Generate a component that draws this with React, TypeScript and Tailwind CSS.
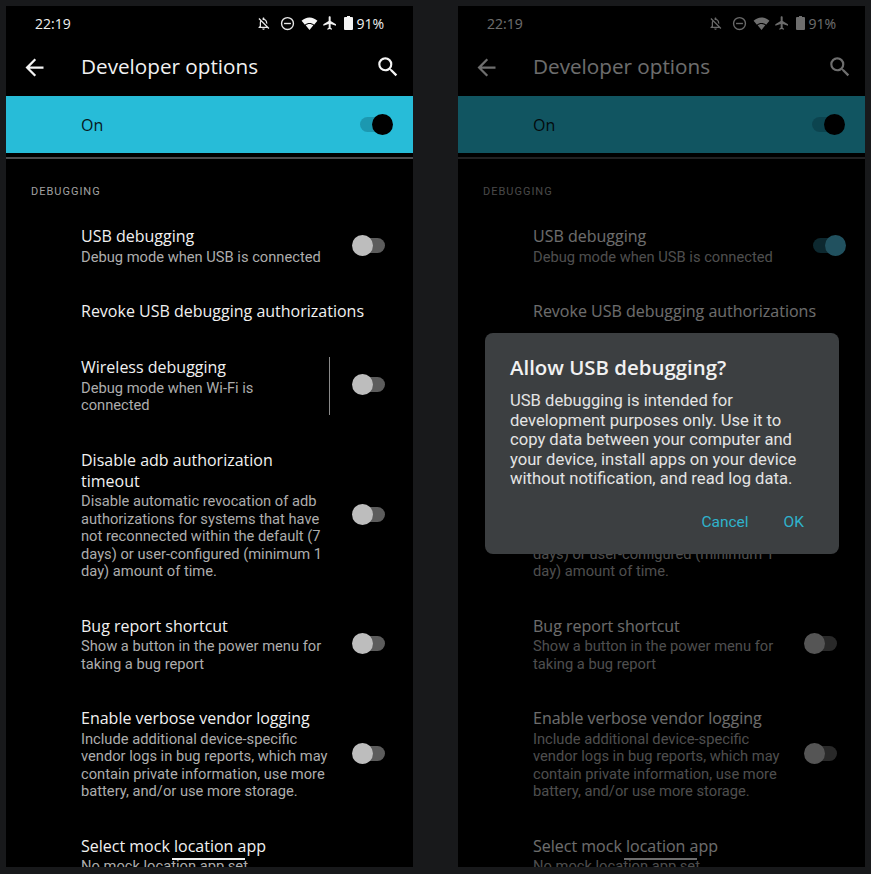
import React from "react";

const HEAD_FONT = "font-['Open_Sans',sans-serif]";
const BODY_FONT = "font-['Roboto',sans-serif]";

const Toggle: React.FC<{ on?: boolean; master?: boolean }> = ({ on, master }) => {
  const track = master ? "bg-[#1c98b0]" : on ? "bg-[#1d5a68]" : "bg-[#5c5c5c]";
  const thumb = master
    ? "bg-black right-[-9px]"
    : on
      ? "bg-[#4ab4d2] right-[-9px]"
      : "bg-[#bdbdbd] left-[-9px]";
  return (
    <div className="flex w-[42px] shrink-0 justify-center">
      <div className={`relative h-[15px] w-[24px] rounded-full ${track}`}>
        <div className={`absolute top-[-3px] h-[21px] w-[21px] rounded-full ${thumb}`} />
      </div>
    </div>
  );
};

const SettingRow: React.FC<{
  title: React.ReactNode;
  summary?: React.ReactNode;
  toggle?: boolean;
  on?: boolean;
  divider?: boolean;
}> = ({ title, summary, toggle, on, divider }) => (
  <div className="flex items-center pl-[75px] pr-[19px]">
    <div className={divider ? "w-[220px]" : toggle ? "w-[248px]" : "flex-1"}>
      <div className={`${HEAD_FONT} text-[16px] leading-[21px] text-[#f1f1f1]`}>{title}</div>
      {summary && (
        <div className={`${BODY_FONT} mt-[1.5px] text-[14.7px] leading-[17.5px] text-[#adadad]`}>
          {summary}
        </div>
      )}
    </div>
    {divider && <div className="ml-[28px] w-px self-stretch bg-[#8a8a8a]" />}
    {toggle && (
      <div className="mb-[2px] ml-auto">
        <Toggle on={on} />
      </div>
    )}
  </div>
);

const StatusIcons = () => (
  <div className="flex items-center">
    {/* bell off */}
    <svg width="15" height="15" viewBox="0 0 24 24" fill="#e8e8e8">
      <path d="M12 22c1.1 0 2-.9 2-2h-4c0 1.1.9 2 2 2zm0-15.5c2.49 0 4 2.02 4 4.5v.1l2 2V11c0-3.07-1.63-5.64-4.5-6.32V4c0-.83-.67-1.5-1.5-1.5s-1.5.67-1.5 1.5v.68c-.24.06-.47.15-.69.23l1.64 1.64c.18-.02.36-.05.55-.05zM5.41 3.35L4 4.76l2.81 2.81C6.29 8.57 6 9.74 6 11v5l-2 2v1h14.24l1.74 1.74 1.41-1.41L5.41 3.35zM16 17H8v-6c0-.68.12-1.32.34-1.9L16 16.76V17z" />
    </svg>
    {/* do not disturb */}
    <svg className="ml-[9px]" width="15" height="15" viewBox="0 0 24 24" fill="none" stroke="#e8e8e8" strokeWidth="2.2">
      <circle cx="12" cy="12" r="9.5" />
      <path d="M6.5 12h11" />
    </svg>
    {/* wifi */}
    <svg className="ml-[6px]" width="17" height="15" viewBox="0 0 24 20" fill="#f4f4f4">
      <path d="M12 19L6.6 12.6C8 11.4 9.9 10.6 12 10.6s4 .8 5.4 2L12 19z" />
      <path d="M0.8 6.2C3.8 3.3 7.7 1.5 12 1.5s8.2 1.8 11.2 4.7l-4.7 5.4C16.8 10 14.5 9.2 12 9.2s-4.8.8-6.5 2.4L0.8 6.2z" />
    </svg>
    {/* airplane */}
    <svg className="ml-[4px]" width="16" height="16" viewBox="0 0 24 24" fill="#f0f0f0">
      <path d="M21 16v-2l-8-5V3.5c0-.83-.67-1.5-1.5-1.5S10 2.67 10 3.5V9l-8 5v2l8-2.5V19l-2 1.5V22l3.5-1 3.5 1v-1.5L13 19v-5.5l8 2.5z" />
    </svg>
    {/* battery */}
    <svg className="ml-[6px]" width="9" height="14" viewBox="0 0 9 14" fill="#f4f4f4">
      <path d="M3 0h3v1h2a1 1 0 0 1 1 1v11a1 1 0 0 1-1 1H1a1 1 0 0 1-1-1V2a1 1 0 0 1 1-1h2z" />
    </svg>
    <span className={`${HEAD_FONT} ml-[3px] text-[14px] text-[#f0f0f0]`}>91%</span>
  </div>
);

const Phone: React.FC<{ dialog?: boolean }> = ({ dialog }) => (
  <div className="relative flex h-[861px] w-[407px] shrink-0 flex-col overflow-hidden bg-black">
    {/* Status bar */}
    <div className="flex h-[34px] shrink-0 items-center justify-between pl-[29px] pr-[29px]">
      <span className={`${HEAD_FONT} text-[14px] text-[#f0f0f0]`}>22:19</span>
      <StatusIcons />
    </div>

    {/* Toolbar */}
    <div className="flex h-[56px] shrink-0 items-center pb-[2px] pl-[15px] pr-[12px]">
      <svg width="27" height="27" viewBox="0 0 24 24" fill="#f4f4f4">
        <path d="M20 11H7.83l5.59-5.59L12 4l-8 8 8 8 1.41-1.41L7.83 13H20v-2z" />
      </svg>
      <span className={`${HEAD_FONT} ml-[33px] text-[20.7px] text-[#f1f1f1]`}>Developer options</span>
      <svg className="ml-auto" width="26" height="26" viewBox="0 0 24 24" fill="#f4f4f4">
        <path d="M15.5 14h-.79l-.28-.27A6.471 6.471 0 0 0 16 9.5 6.5 6.5 0 1 0 9.5 16c1.61 0 3.09-.59 4.23-1.57l.27.28v.79l5 4.99L20.49 19l-4.99-5zm-6 0C7.01 14 5 11.99 5 9.5S7.01 5 9.5 5 14 7.01 14 9.5 11.99 14 9.5 14z" />
      </svg>
    </div>

    {/* Master switch */}
    <div className="flex h-[57px] shrink-0 items-center justify-between bg-[#27bcd8] pl-[75px] pr-[20px]">
      <span className={`${HEAD_FONT} text-[16px] text-[#06181c]`}>On</span>
      <Toggle master />
    </div>
    <div className="mt-[4px] h-[2px] shrink-0 bg-[#4b4b4d]" />

    {/* Section header */}
    <div className={`${BODY_FONT} mt-[26px] shrink-0 pl-[25px] text-[11px] leading-[13px] tracking-[0.09em] text-[#a0a0a0]`}>
      DEBUGGING
    </div>

    {/* Settings list */}
    <div className="mt-[28px] flex shrink-0 flex-col gap-[35px]">
      <SettingRow title="USB debugging" summary="Debug mode when USB is connected" toggle on={dialog} />
      <SettingRow title="Revoke USB debugging authorizations" />
      <SettingRow title="Wireless debugging" summary="Debug mode when Wi-Fi is connected" toggle divider />
      <SettingRow
        title="Disable adb authorization timeout"
        summary="Disable automatic revocation of adb authorizations for systems that have not reconnected within the default (7 days) or user-configured (minimum 1 day) amount of time."
        toggle
      />
      <SettingRow
        title="Bug report shortcut"
        summary="Show a button in the power menu for taking a bug report"
        toggle
      />
      <SettingRow
        title="Enable verbose vendor logging"
        summary="Include additional device-specific vendor logs in bug reports, which may contain private information, use more battery, and/or use more storage."
        toggle
      />
      <SettingRow
        title={
          <>
            Select mock{" "}
            <span className="relative">
              location
              <span className="absolute left-[-2px] right-[-12px] top-[23px] h-[2px] bg-[#f1f1f1]" />
            </span>{" "}
            app
          </>
        }
        summary="No mock location app set"
      />
    </div>

    {dialog && (
      <>
        <div className="absolute inset-0 bg-black/55" />
        <div className="absolute left-[27px] top-[327px] flex h-[221px] w-[354px] flex-col rounded-[8px] bg-[#3c3f41] px-[25px] pt-[21px]">
          <div className={`${HEAD_FONT} text-[20.4px] font-semibold leading-[26px] text-[#f1f1f1]`}>
            Allow USB debugging?
          </div>
          <div className={`${BODY_FONT} mt-[11px] text-[16.6px] leading-[19.6px] text-[#e4e4e4]`}>
            USB debugging is intended for development purposes only. Use it to copy data between your computer and your device, install apps on your device without notification, and read log data.
          </div>
          <div className={`${BODY_FONT} mt-[22px] flex justify-end gap-[35px] pr-[10px] text-[15.5px] text-[#2fb3cc]`}>
            <span>Cancel</span>
            <span>OK</span>
          </div>
        </div>
      </>
    )}
  </div>
);

export default function App() {
  return (
    <div className="flex h-[874px] w-[871px] gap-[45px] overflow-hidden bg-[#18191b] pl-[6px] pt-[6px]">
      <Phone />
      <Phone dialog />
    </div>
  );
}
